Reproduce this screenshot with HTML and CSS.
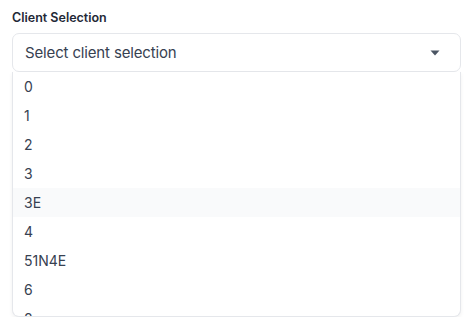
FILE: index.html
```html
<!DOCTYPE html>
<html>
<head>
<meta charset="utf-8">
<link rel="stylesheet" href="styles.css">
</head>
<body>
<div class="field">
  <label class="label">Client Selection</label>
  <div class="select-wrap">
    <div class="select">
      <span class="placeholder">Select client selection</span>
      <svg class="caret" width="10" height="6" viewBox="0 0 10 6"><path d="M0.5 0.5 H9.5 L5 5.5 Z" fill="#4b5563"/></svg>
    </div>
    <ul class="menu">
      <li>0</li>
      <li>1</li>
      <li>2</li>
      <li>3</li>
      <li class="active">3E</li>
      <li>4</li>
      <li>51N4E</li>
      <li>6</li>
      <li>8</li>
    </ul>
  </div>
</div>
</body>
</html>
```
FILE: styles.css
```css
* { box-sizing: border-box; }
html, body { margin: 0; padding: 0; background: #fff; }
body {
  font-family: Inter, "Noto Sans", sans-serif;
  padding: 10px 13px 0 12px;
}
.field { display: flex; flex-direction: column; }
.label {
  font-size: 12.5px;
  font-weight: 600;
  color: #1f2937;
  line-height: 16px;
  margin-bottom: 7px;
}
.select-wrap { display: flex; flex-direction: column; }
.select {
  height: 39px;
  border: 1px solid #e5e7eb;
  border-radius: 7px;
  display: flex;
  align-items: center;
  justify-content: space-between;
  padding: 0 20px 0 12px;
  background: #fff;
}
.placeholder {
  font-size: 15px;
  letter-spacing: -0.15px;
  color: #374151;
}
.caret { display: block; }
.menu {
  height: 245px;
  margin: 0;
  padding: 0;
  list-style: none;
  overflow: hidden;
  background: #fff;
  border: 1px solid #e5e7eb;
  border-top: none;
  border-radius: 0 0 7px 7px;
  box-shadow: 0 2px 4px rgba(0,0,0,0.06);
}
.menu li {
  height: 29px;
  line-height: 29px;
  padding-left: 11px;
  font-size: 14px;
  color: #374151;
}
.menu li.active { background: #f9fafb; }
```
